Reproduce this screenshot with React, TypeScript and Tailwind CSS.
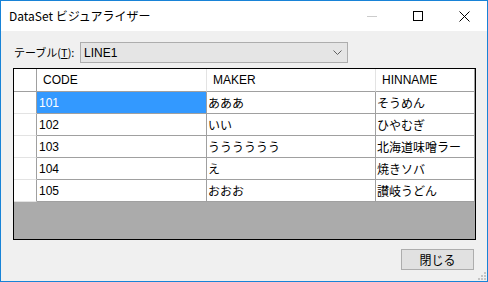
import React from 'react';

const rows = [
  { code: '101', maker: 'あああ', hin: 'そうめん' },
  { code: '102', maker: 'いい', hin: 'ひやむぎ' },
  { code: '103', maker: 'うううううう', hin: '北海道味噌ラー' },
  { code: '104', maker: 'え', hin: '焼きソバ' },
  { code: '105', maker: 'おおお', hin: '讃岐うどん' },
];

const font = { fontFamily: '"Liberation Sans", "Noto Sans CJK JP", sans-serif' };
const jp = { fontFamily: '"Noto Sans CJK JP", sans-serif' };

export default function App() {
  return (
    <div className="w-[488px] h-[282px] border border-[#1883d7] bg-[#f0f0f0] flex flex-col text-black" style={font}>
      {/* title bar */}
      <div className="h-[30px] bg-white flex items-center shrink-0">
        <span className="ml-[8px] text-[12px] leading-none" style={jp}>DataSet ビジュアライザー</span>
        <div className="ml-auto flex items-center h-full">
          <div className="w-[46px] h-full flex items-center justify-center">
            <div className="w-[10px] h-px bg-[#cccccc]" />
          </div>
          <div className="w-[46px] h-full flex items-center justify-center">
            <div className="w-[10px] h-[10px] border border-black" />
          </div>
          <div className="w-[46px] h-full flex items-center justify-center">
            <svg width="11" height="11" viewBox="0 0 11 11">
              <path d="M0.5 0.5L10.5 10.5M10.5 0.5L0.5 10.5" stroke="#000" strokeWidth="1" />
            </svg>
          </div>
        </div>
      </div>

      {/* body */}
      <div className="flex-1 flex flex-col px-[12px] relative">
        <div className="mt-[11px] flex items-center h-[21px]">
          <span className="text-[11px] ml-px w-[66px] shrink-0 whitespace-nowrap" style={jp}>テーブル(<span className="underline">T</span>):</span>
          <div className="w-[268px] shrink-0 h-[21px] border border-[#adadad] bg-[#e5e5e5] flex items-center pl-[3px] pr-[5px]">
            <span className="text-[12px]">LINE1</span>
            <svg className="ml-auto" width="9" height="6" viewBox="0 0 9 6">
              <path d="M0.5 0.5L4.5 4.5L8.5 0.5" stroke="#606060" strokeWidth="1" fill="none" />
            </svg>
          </div>
        </div>

        {/* grid */}
        <div className="mt-[5px] w-[463px] h-[172px] border border-black bg-[#ababab] flex flex-col text-[12px]">
          <div className="flex h-[23px] bg-white">
            <div className="w-[23px] border-r border-b border-[#a0a0a0]" />
            <div className="w-[170px] border-r border-b border-r-[#e3e3e3] border-b-[#a0a0a0] pl-[6px] flex items-center">CODE</div>
            <div className="w-[169px] border-r border-b border-r-[#e3e3e3] border-b-[#a0a0a0] pl-[6px] flex items-center">MAKER</div>
            <div className="w-[99px] border-r border-b border-[#a0a0a0] pl-[6px] flex items-center">HINNAME</div>
          </div>
          {rows.map((r, i) => (
            <div key={r.code} className="flex h-[22px]">
              <div className="w-[23px] bg-white border-r border-b border-r-[#a0a0a0] border-b-[#e3e3e3]" />
              <div className={`w-[170px] border-r border-b border-[#a0a0a0] pl-[2px] flex items-center ${i === 0 ? 'bg-[#3399ff] text-white' : 'bg-white'}`}>{r.code}</div>
              <div className="w-[169px] bg-white border-r border-b border-[#a0a0a0] pl-px flex items-center" style={jp}>{r.maker}</div>
              <div className="w-[99px] bg-white border-r border-b border-[#a0a0a0] pl-px flex items-center whitespace-nowrap overflow-hidden" style={jp}>{r.hin}</div>
            </div>
          ))}
        </div>

        <div className="mt-[9px] flex justify-end pr-px">
          <button className="w-[73px] h-[21px] border border-[#adadad] bg-[#e1e1e1] text-[12px] flex items-center justify-center" style={jp}>閉じる</button>
        </div>

        {/* size grip */}
        <svg className="absolute right-[1px] bottom-[1px]" width="8" height="8" viewBox="0 0 8 8">
          <rect x="6" y="0" width="2" height="2" fill="#c4c4c4" />
          <rect x="3" y="3" width="2" height="2" fill="#c4c4c4" />
          <rect x="6" y="3" width="2" height="2" fill="#c4c4c4" />
          <rect x="0" y="6" width="2" height="2" fill="#c4c4c4" />
          <rect x="3" y="6" width="2" height="2" fill="#c4c4c4" />
          <rect x="6" y="6" width="2" height="2" fill="#c4c4c4" />
        </svg>
      </div>
    </div>
  );
}
